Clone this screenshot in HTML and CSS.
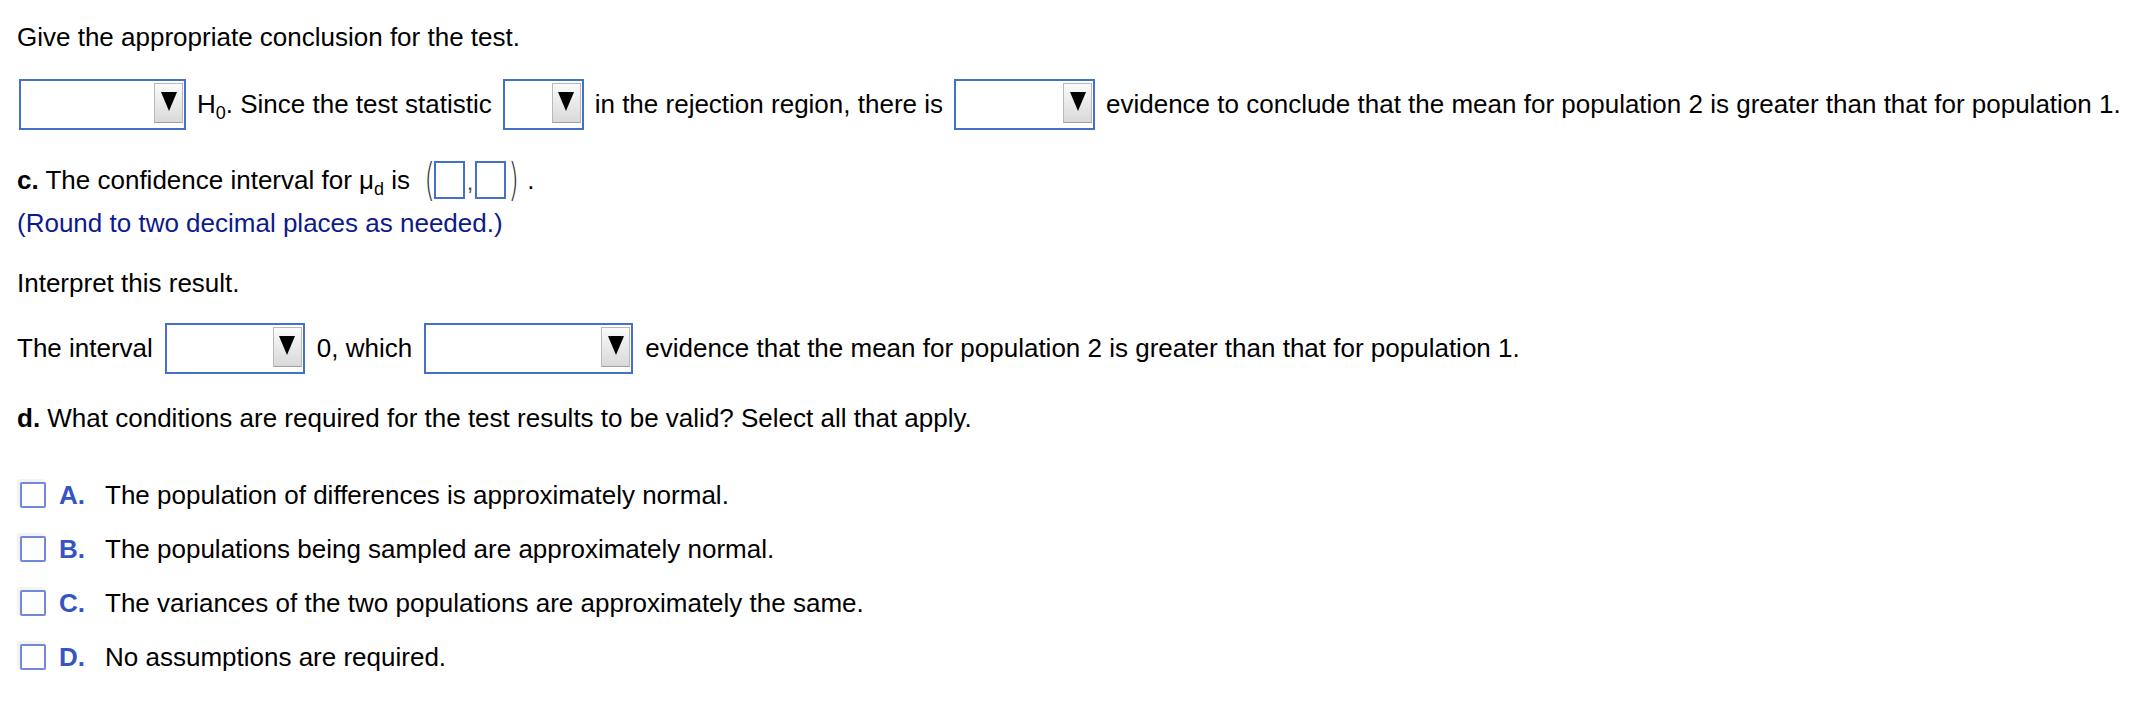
FILE: index.html
```html
<!DOCTYPE html>
<html>
<head>
<meta charset="utf-8">
<link rel="stylesheet" href="styles.css">
</head>
<body>
<div class="page">
  <p class="line l1">Give the appropriate conclusion for the test.</p>

  <div class="row r2">
    <span class="dd w1"><span class="btn"><svg width="16" height="20" viewBox="0 0 16 20"><polygon points="0,1 16,1 8,20" fill="#000"/></svg></span></span>
    <span class="txt">H<sub class="sub">0</sub>. Since the test statistic</span>
    <span class="dd w2"><span class="btn"><svg width="16" height="20" viewBox="0 0 16 20"><polygon points="0,1 16,1 8,20" fill="#000"/></svg></span></span>
    <span class="txt">in the rejection region, there is</span>
    <span class="dd w3"><span class="btn"><svg width="16" height="20" viewBox="0 0 16 20"><polygon points="0,1 16,1 8,20" fill="#000"/></svg></span></span>
    <span class="txt">evidence to conclude that the mean for population 2 is greater than that for population 1.</span>
  </div>

  <div class="row rc">
    <span class="txt"><b>c.</b> The confidence interval for μ<sub class="sub">d</sub> is</span>
    <span class="ci">
      <span class="paren">(</span><span class="box"></span><span class="comma">,</span><span class="box"></span><span class="paren">)</span>
    </span>
    <span class="dot">.</span>
  </div>
  <p class="line note">(Round to two decimal places as needed.)</p>

  <p class="line interp">Interpret this result.</p>

  <div class="row ri">
    <span class="txt">The interval</span>
    <span class="dd w4"><span class="btn"><svg width="16" height="20" viewBox="0 0 16 20"><polygon points="0,1 16,1 8,20" fill="#000"/></svg></span></span>
    <span class="txt">0, which</span>
    <span class="dd w5"><span class="btn"><svg width="16" height="20" viewBox="0 0 16 20"><polygon points="0,1 16,1 8,20" fill="#000"/></svg></span></span>
    <span class="txt">evidence that the mean for population 2 is greater than that for population 1.</span>
  </div>

  <p class="line dq"><b>d.</b> What conditions are required for the test results to be valid? Select all that apply.</p>

  <ul class="opts">
    <li class="opt"><span class="cb"></span><span class="let">A.</span><span class="otxt">The population of differences is approximately normal.</span></li>
    <li class="opt"><span class="cb"></span><span class="let">B.</span><span class="otxt">The populations being sampled are approximately normal.</span></li>
    <li class="opt"><span class="cb"></span><span class="let">C.</span><span class="otxt">The variances of the two populations are approximately the same.</span></li>
    <li class="opt"><span class="cb"></span><span class="let">D.</span><span class="otxt">No assumptions are required.</span></li>
  </ul>
</div>
</body>
</html>
```

FILE: styles.css
```css
html, body {
  margin: 0;
  padding: 0;
  background: #fff;
}
.page {
  font-family: "Liberation Sans", Arial, Helvetica, sans-serif;
  font-size: 26px;
  color: #000;
  padding: 22px 0 0 17px;
}
.line {
  margin: 0;
  line-height: 30px;
  white-space: nowrap;
}
.row {
  display: flex;
  align-items: center;
  gap: 11px;
  white-space: nowrap;
  line-height: 30px;
}
.sub {
  font-size: 18px;
  vertical-align: -6px;
  line-height: 0;
}
.r2 {
  margin-top: 26px;
  height: 52px;
  margin-left: 2px;
}
.dd {
  box-sizing: border-box;
  height: 51px;
  border: 2px solid #4570c8;
  background: #fff;
  display: inline-flex;
  justify-content: flex-end;
  align-items: center;
  padding: 1px 1px 3px 0;
}
.w1 { width: 167px; }
.w2 { width: 81px; }
.w3 { width: 141px; }
.w4 { width: 140px; }
.w5 { width: 209px; }
.btn {
  box-sizing: border-box;
  width: 29px;
  height: 40px;
  border: 1px solid #b9b9b9;
  border-bottom-color: #a0a0a0;
  background: linear-gradient(#fbfbfb, #e6e6e6 60%, #d9d9d9);
  display: flex;
  align-items: center;
  justify-content: center;
}
.btn svg { display: block; margin-top: -4px; }

.rc {
  margin-top: 30px;
  height: 40px;
  gap: 0;
}
.ci {
  display: inline-flex;
  align-items: center;
  margin-left: 12px;
  height: 40px;
}
.paren {
  font-family: "DejaVu Sans", sans-serif;
  font-weight: 200;
  font-size: 44px;
  line-height: 40px;
  color: #333;
  display: inline-block;
  transform: scaleX(0.6);
  width: 12px;
  text-align: center;
}
.box {
  box-sizing: border-box;
  width: 31px;
  height: 38px;
  border: 2px solid #4570c8;
  background: #fff;
  display: inline-block;
}
.comma {
  font-size: 22px;
  align-self: flex-end;
  line-height: 22px;
  margin: 0 2px 6px 2px;
  color: #444;
}
.dot {
  margin-left: 9px;
}
.note {
  margin-top: 8px;
  color: #0b1a8c;
}
.interp {
  margin-top: 30px;
}
.ri {
  margin-top: 24px;
  height: 52px;
  gap: 12px;
}
.dq {
  margin-top: 29px;
}
.opts {
  list-style: none;
  margin: 42px 0 0 3px;
  padding: 0;
  display: flex;
  flex-direction: column;
  gap: 14px;
}
.opt {
  display: flex;
  align-items: center;
  height: 40px;
}
.cb {
  box-sizing: border-box;
  width: 26px;
  height: 26px;
  border: 2px solid #7189d9;
  border-radius: 2px;
  background: #fff;
  box-shadow: -2px -2px 0 1px #f3f3f3;
}
.let {
  color: #3555c5;
  font-weight: bold;
  margin-left: 13px;
  width: 46px;
}
.otxt {
  color: #000;
}
```
